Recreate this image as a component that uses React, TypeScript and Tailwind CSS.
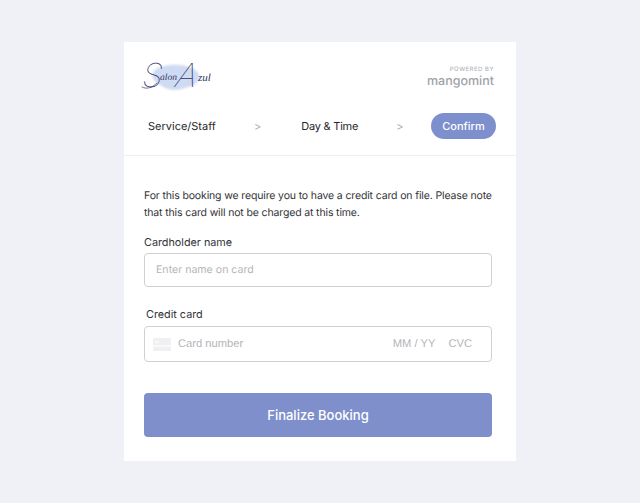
import React from 'react';

const font = "[font-family:Inter,'Liberation_Sans',sans-serif] [text-rendering:geometricPrecision]";

const Logo: React.FC = () => (
  <div className="relative w-[72px] h-[36px] text-[#2f3566]">
    <svg className="absolute inset-0 w-full h-full" viewBox="0 0 72 36" fill="none" xmlns="http://www.w3.org/2000/svg">
      <defs>
        <filter id="soft" x="-20%" y="-20%" width="140%" height="140%">
          <feGaussianBlur stdDeviation="1.3" />
        </filter>
      </defs>
      <path
        d="M12 15C15 9 22 8 29 7C36 6 45 7 51 10C58 13 60 19 57 23C54 28 47 29 41 31C33 33 26 32 21 28C15 25 10 21 12 15Z"
        fill="#cfdaf3"
        filter="url(#soft)"
      />
      {/* swash of the signature */}
      <path d="M1 29C6 32 12 29 16 25" stroke="#2f3566" strokeWidth="0.7" strokeLinecap="round" />
    </svg>
    <span className="absolute left-[2px] top-[-5px] -skew-x-12 text-[33px] leading-[44px] font-thin">S</span>
    <span className="absolute left-[19px] top-[13px] text-[9.5px] leading-[14px] italic [font-family:'Liberation_Serif',serif]">alon</span>
    <span className="absolute left-[36px] top-[-5px] -skew-x-[20deg] text-[33px] leading-[44px] font-thin">A</span>
    <span className="absolute left-[57px] top-[13px] text-[11px] leading-[14px] italic [font-family:'Liberation_Serif',serif]">zul</span>
  </div>
);

const Chevron: React.FC = () => <span className="text-[11px] text-[#a9abb0]">&gt;</span>;

const CardIcon: React.FC = () => (
  <svg width="18" height="13" viewBox="0 0 18 13" xmlns="http://www.w3.org/2000/svg">
    <rect width="18" height="13" rx="1.5" fill="#f0f0f2" />
    <rect y="7" width="18" height="2" fill="#f9f9fa" />
    <rect x="2" y="3" width="4" height="2" fill="#f9f9fa" />
  </svg>
);

export default function App() {
  return (
    <div className={`min-h-screen bg-[#f0f1f6] flex items-center justify-center text-[#26272b] ${font}`}>
      <div className="w-[392px] h-[419px] bg-white flex flex-col">
        <div className="h-[113px] border-b border-[#eeeef1] box-content">
          <div className="flex items-start justify-between pl-[17px] pr-[22px] pt-[16px] h-[71px]">
            <Logo />
            <div className="flex flex-col items-end pt-[8px]">
              <span className="text-[6px] leading-[8px] tracking-[0.08em] text-[#a8a9ae]">POWERED BY</span>
              <span className="text-[12.5px] leading-[15px] text-[#a0a2a8] font-medium">mangomint</span>
            </div>
          </div>
          <div className="flex items-center pl-[24px] pr-[20px] h-[26px] text-[11px]">
            <span>Service/Staff</span>
            <span className="ml-[38px]"><Chevron /></span>
            <span className="ml-[40px] tracking-[-0.02em]">Day &amp; Time</span>
            <span className="ml-[38px]"><Chevron /></span>
            <span className="ml-auto w-[65px] h-[26px] rounded-full bg-[#7e8fcd] text-white font-medium flex items-center justify-center">Confirm</span>
          </div>
        </div>
        <div className="px-[20px] pt-[32px] pr-[24px]">
          <p className="text-[10.5px] tracking-[-0.14px] leading-[16.5px] text-[#333438]">
            For this booking we require you to have a credit card on file. Please note that this card will not be charged at this time.
          </p>
          <div className="mt-[15px] text-[10.8px] leading-[14px] text-[#333438]">Cardholder name</div>
          <div className="mt-[3px] h-[34px] rounded-[4px] border border-[#cfd0d4] flex items-center px-[11px] text-[10.6px] text-[#b4b5ba]">
            Enter name on card
          </div>
          <div className="mt-[21px] ml-[2px] text-[10.8px] leading-[14px] text-[#333438]">Credit card</div>
          <div className="mt-[4px] h-[36px] rounded-[4px] border border-[#cfd0d4] flex items-center pl-[8px] pr-[19px] pt-[1px] text-[11.2px] text-[#b4b5ba] [font-family:'Liberation_Sans',sans-serif]">
            <CardIcon />
            <span className="ml-[7px]">Card number</span>
            <span className="ml-auto">MM / YY</span>
            <span className="ml-[13px]">CVC</span>
          </div>
          <button className="mt-[31px] w-full h-[44px] pt-[1px] rounded-[4px] bg-[#7e8fcb] text-white text-[13px] font-medium">
            Finalize Booking
          </button>
        </div>
      </div>
    </div>
  );
}
